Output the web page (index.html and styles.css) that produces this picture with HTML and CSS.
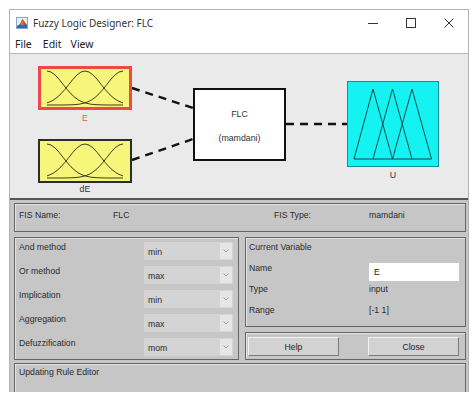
FILE: index.html
```html
<!DOCTYPE html>
<html>
<head>
<meta charset="utf-8">
<link rel="stylesheet" href="styles.css">
</head>
<body>
<div class="window">
  <div class="titlebar">
    <svg class="appicon" width="12" height="12" viewBox="0 0 12 12">
      <rect x="0.5" y="0.5" width="11" height="11" fill="#e8eef6" stroke="#8aa4c8"/>
      <path d="M1 9 L4 7 L6.5 2 L9 6 L11 8 L11 11 L1 11 Z" fill="#2a6ab0"/>
      <path d="M4 7 L6.5 2 L9 6 L7 9 Z" fill="#e8641e"/>
      <path d="M6.5 2 L9 6 L11 8 L8.5 7 Z" fill="#c83c14"/>
    </svg>
    <span class="title">Fuzzy Logic Designer: FLC</span>
    <div class="controls">
      <div class="ctl"><svg width="10" height="10" viewBox="0 0 10 10"><line x1="0" y1="5.5" x2="10" y2="5.5" stroke="#333" stroke-width="1"/></svg></div>
      <div class="ctl"><svg width="10" height="10" viewBox="0 0 10 10"><rect x="0.5" y="0.5" width="9" height="9" fill="none" stroke="#333" stroke-width="1"/></svg></div>
      <div class="ctl"><svg width="10" height="10" viewBox="0 0 10 10"><path d="M0.5 0.5 L9.5 9.5 M9.5 0.5 L0.5 9.5" stroke="#333" stroke-width="1"/></svg></div>
    </div>
  </div>
  <div class="menubar">
    <span class="menu m-file">File</span>
    <span class="menu m-edit">Edit</span>
    <span class="menu m-view">View</span>
  </div>

  <div class="diagram">
    <svg class="wires" width="458" height="144" viewBox="0 0 458 144">
      <g stroke="#111" stroke-width="2.4" stroke-dasharray="8 6" fill="none">
        <line x1="122" y1="34" x2="183" y2="54"/>
        <line x1="122" y1="106" x2="183" y2="85"/>
        <line x1="276" y1="70" x2="337" y2="70"/>
      </g>
    </svg>

    <div class="node n-e">
      <div class="mfbox mf-sel">
        <svg class="mfplot" viewBox="3 3 88 38">
          <g class="curve">
            <polyline points="9,5 13,6 17,8.9 21,13.2 25,18.3 29,23.3 33,27.8 37,31.5 41,34.3 45,36.2 49,37.4 53,38.2 57,38.6 61,38.8 65,38.9 69,39 85,39"/>
            <polyline points="9,36.9 11,36.2 15,34.3 19,31.5 23,27.8 27,23.3 31,18.3 35,13.2 39,8.9 43,6 47,5 51,6 55,8.9 59,13.2 63,18.3 67,23.3 71,27.8 75,31.5 79,34.3 83,36.2 85,36.9"/>
            <polyline points="85,5 81,6 77,8.9 73,13.2 69,18.3 65,23.3 61,27.8 57,31.5 53,34.3 49,36.2 45,37.4 41,38.2 37,38.6 33,38.8 29,38.9 25,39 9,39"/>
          </g>
        </svg>
      </div>
      <div class="nlabel red">E</div>
    </div>

    <div class="node n-de">
      <div class="mfbox">
        <svg class="mfplot" viewBox="2 2 90 40">
          <g class="curve">
            <polyline points="9,5 13,6 17,8.9 21,13.2 25,18.3 29,23.3 33,27.8 37,31.5 41,34.3 45,36.2 49,37.4 53,38.2 57,38.6 61,38.8 65,38.9 69,39 85,39"/>
            <polyline points="9,36.9 11,36.2 15,34.3 19,31.5 23,27.8 27,23.3 31,18.3 35,13.2 39,8.9 43,6 47,5 51,6 55,8.9 59,13.2 63,18.3 67,23.3 71,27.8 75,31.5 79,34.3 83,36.2 85,36.9"/>
            <polyline points="85,5 81,6 77,8.9 73,13.2 69,18.3 65,23.3 61,27.8 57,31.5 53,34.3 49,36.2 45,37.4 41,38.2 37,38.6 33,38.8 29,38.9 25,39 9,39"/>
          </g>
        </svg>
      </div>
      <div class="nlabel">dE</div>
    </div>

    <div class="node n-flc">
      <div class="flcbox">
        <div class="flc-name">FLC</div>
        <div class="flc-type">(mamdani)</div>
      </div>
    </div>

    <div class="node n-u">
      <div class="outbox">
        <svg class="mfplot" viewBox="1 1 90 84">
          <g class="tri">
            <polyline points="7,78 26,8 45.5,78"/>
            <polyline points="26,78 45.5,8 65,78"/>
            <polyline points="45.5,78 65,8 84.5,78"/>
            <line x1="7" y1="78" x2="84.5" y2="78"/>
          </g>
        </svg>
      </div>
      <div class="nlabel">U</div>
    </div>
  </div>

  <div class="lower">
    <div class="panel fis">
      <span class="fis-k1">FIS Name:</span>
      <span class="fis-v1">FLC</span>
      <span class="fis-k2">FIS Type:</span>
      <span class="fis-v2">mamdani</span>
    </div>

    <div class="main">
      <div class="panel methods">
        <div class="mrow"><span class="mlabel">And method</span><div class="select"><span class="sval">min</span><span class="sarrow"><svg width="6" height="4" viewBox="0 0 6 4"><path d="M0.5 0.5 L3 3 L5.5 0.5" fill="none" stroke="#9a9a9a" stroke-width="0.9"/></svg></span></div></div>
        <div class="mrow"><span class="mlabel">Or method</span><div class="select"><span class="sval">max</span><span class="sarrow"><svg width="6" height="4" viewBox="0 0 6 4"><path d="M0.5 0.5 L3 3 L5.5 0.5" fill="none" stroke="#9a9a9a" stroke-width="0.9"/></svg></span></div></div>
        <div class="mrow"><span class="mlabel">Implication</span><div class="select"><span class="sval">min</span><span class="sarrow"><svg width="6" height="4" viewBox="0 0 6 4"><path d="M0.5 0.5 L3 3 L5.5 0.5" fill="none" stroke="#9a9a9a" stroke-width="0.9"/></svg></span></div></div>
        <div class="mrow"><span class="mlabel">Aggregation</span><div class="select"><span class="sval">max</span><span class="sarrow"><svg width="6" height="4" viewBox="0 0 6 4"><path d="M0.5 0.5 L3 3 L5.5 0.5" fill="none" stroke="#9a9a9a" stroke-width="0.9"/></svg></span></div></div>
        <div class="mrow"><span class="mlabel">Defuzzification</span><div class="select"><span class="sval">mom</span><span class="sarrow"><svg width="6" height="4" viewBox="0 0 6 4"><path d="M0.5 0.5 L3 3 L5.5 0.5" fill="none" stroke="#9a9a9a" stroke-width="0.9"/></svg></span></div></div>
      </div>

      <div class="rightcol">
        <div class="panel curvar">
          <div class="cv-title">Current Variable</div>
          <div class="cv-row cv-name"><span class="cv-k">Name</span><div class="cv-input">E</div></div>
          <div class="cv-row cv-type"><span class="cv-k">Type</span><span class="cv-v">input</span></div>
          <div class="cv-row cv-range"><span class="cv-k">Range</span><span class="cv-v">[-1 1]</span></div>
        </div>
        <div class="panel buttons">
          <div class="btn">Help</div>
          <div class="btn">Close</div>
        </div>
      </div>
    </div>

    <div class="panel updating">Updating Rule Editor</div>
  </div>
</div>
</body>
</html>
```
FILE: styles.css
```css
html, body {
  margin: 0;
  padding: 0;
  background: #ffffff;
}
body {
  font-family: "Liberation Sans", Arial, sans-serif;
}
.window {
  margin: 9px 0 0 9px;
  width: 460px;
  height: 383px;
  box-sizing: border-box;
  border: 1px solid #b4b4b4;
  border-bottom: 0;
  background: #ffffff;
  display: flex;
  flex-direction: column;
  overflow: hidden;
}
.titlebar {
  height: 25px;
  flex: none;
  display: flex;
  align-items: center;
  padding-left: 6px;
  font-family: "Noto Sans", "Open Sans", sans-serif;
}
.appicon {
  flex: none;
  margin-top: 1px;
}
.title {
  margin-left: 5px;
  font-size: 10px;
  color: #333333;
}
.controls {
  margin-left: auto;
  display: flex;
  height: 25px;
}
.ctl {
  width: 38px;
  display: flex;
  align-items: center;
  justify-content: center;
}
.ctl svg {
  display: block;
}
.menubar {
  height: 18px;
  flex: none;
  border-bottom: 1px solid #b8b8b8;
  display: flex;
  align-items: center;
  font-family: "Noto Sans", "Open Sans", sans-serif;
  font-size: 10.5px;
  color: #222222;
}
.menu {
  display: block;
}
.m-file { margin-left: 5px; }
.m-edit { margin-left: 11px; }
.m-view { margin-left: 9px; }

/* diagram */
.diagram {
  height: 144px;
  flex: none;
  background: #eaeaea;
  border-bottom: 2px solid #555555;
  position: relative;
}
.wires {
  position: absolute;
  left: 0;
  top: 0;
}
.node {
  position: absolute;
  display: flex;
  flex-direction: column;
  align-items: center;
}
.n-e { left: 28px; top: 12px; width: 94px; }
.n-de { left: 28px; top: 85px; width: 94px; }
.n-flc { left: 183px; top: 34px; width: 93px; }
.n-u { left: 337px; top: 27px; width: 92px; }
.mfbox {
  width: 94px;
  height: 44px;
  box-sizing: border-box;
  border: 2px solid #2c2c2c;
  background: #f6f67a;
}
.mf-sel {
  border: 3px solid #f04848;
}
.mfplot {
  display: block;
  width: 100%;
  height: 100%;
}
.curve polyline {
  fill: none;
  stroke: #3e3e20;
  stroke-width: 1;
}
.tri polyline, .tri line {
  fill: none;
  stroke: #104848;
  stroke-width: 1;
}
.nlabel {
  margin-top: 3px;
  font-size: 8.8px;
  line-height: 10px;
  color: #333333;
}
.n-de .nlabel { margin-top: 1px; }
.nlabel.red {
  color: #f05a5a;
}
.flcbox {
  width: 93px;
  height: 73px;
  box-sizing: border-box;
  border: 2px solid #111111;
  background: #ffffff;
  display: flex;
  flex-direction: column;
  align-items: center;
  font-size: 8.8px;
  line-height: 10px;
  color: #333333;
}
.flc-name { margin-top: 19px; }
.flc-type { margin-top: 14px; }
.outbox {
  width: 92px;
  height: 86px;
  box-sizing: border-box;
  border: 1px solid #1c8c9c;
  background: #14f2f2;
}

/* lower area */
.lower {
  flex: 1;
  background: #c6c6c6;
  padding: 3px 2px 0 4px;
  display: flex;
  flex-direction: column;
  font-size: 8.7px;
  line-height: 10px;
  color: #2a2a2a;
}
.panel {
  box-sizing: border-box;
  border: 1px solid #666666;
  box-shadow: inset 1px 1px 0 #e2e2e2;
  background: #c6c6c6;
}
.fis {
  height: 29px;
  flex: none;
  display: flex;
  padding: 6px 0 0 4px;
}
.fis-k1 { width: 94px; }
.fis-v1 { width: 161px; }
.fis-k2 { width: 95px; }
.main {
  margin-top: 5px;
  display: grid;
  grid-template-columns: 225px 221px;
  column-gap: 6px;
  height: 123px;
  flex: none;
}
.methods {
  padding: 4px 5px 0 4px;
  display: flex;
  flex-direction: column;
  gap: 6px;
}
.mrow {
  display: flex;
  height: 18px;
}
.mlabel {
  flex: 1;
}
.select {
  width: 89px;
  height: 18px;
  box-sizing: border-box;
  background: #d4d4d4;
  display: flex;
  align-items: center;
}
.sval {
  flex: 1;
  padding-left: 4px;
  padding-top: 1px;
  color: #2a2a2a;
}
.sarrow {
  width: 12px;
  height: 16px;
  margin-right: 1px;
  background: #e6e6e6;
  display: flex;
  align-items: center;
  justify-content: center;
}
.sarrow svg { display: block; }
.rightcol {
  display: flex;
  flex-direction: column;
  gap: 5px;
}
.curvar {
  height: 90px;
  padding: 4px 6px 0 3px;
}
.cv-row {
  display: flex;
}
.cv-k {
  width: 120px;
}
.cv-name { margin-top: 11px; height: 18px; }
.cv-type { margin-top: 3px; }
.cv-range { margin-top: 11px; }
.cv-input {
  width: 90px;
  height: 18px;
  box-sizing: border-box;
  background: #ffffff;
  padding: 4px 0 0 5px;
  color: #222222;
}
.cv-v {
  color: #2a2a2a;
}
.buttons {
  height: 28px;
  padding: 4px 6px 0 2px;
  display: flex;
  justify-content: space-between;
}
.btn {
  width: 91px;
  height: 19px;
  box-sizing: border-box;
  background: #d2d2d2;
  border: 1px solid;
  border-color: #f2f2f2 #7c7c7c #7c7c7c #f2f2f2;
  display: flex;
  align-items: center;
  justify-content: center;
  color: #222222;
}
.updating {
  margin-top: 3px;
  flex: 1;
  border-bottom: 0;
  padding: 3px 0 0 4px;
}
```
